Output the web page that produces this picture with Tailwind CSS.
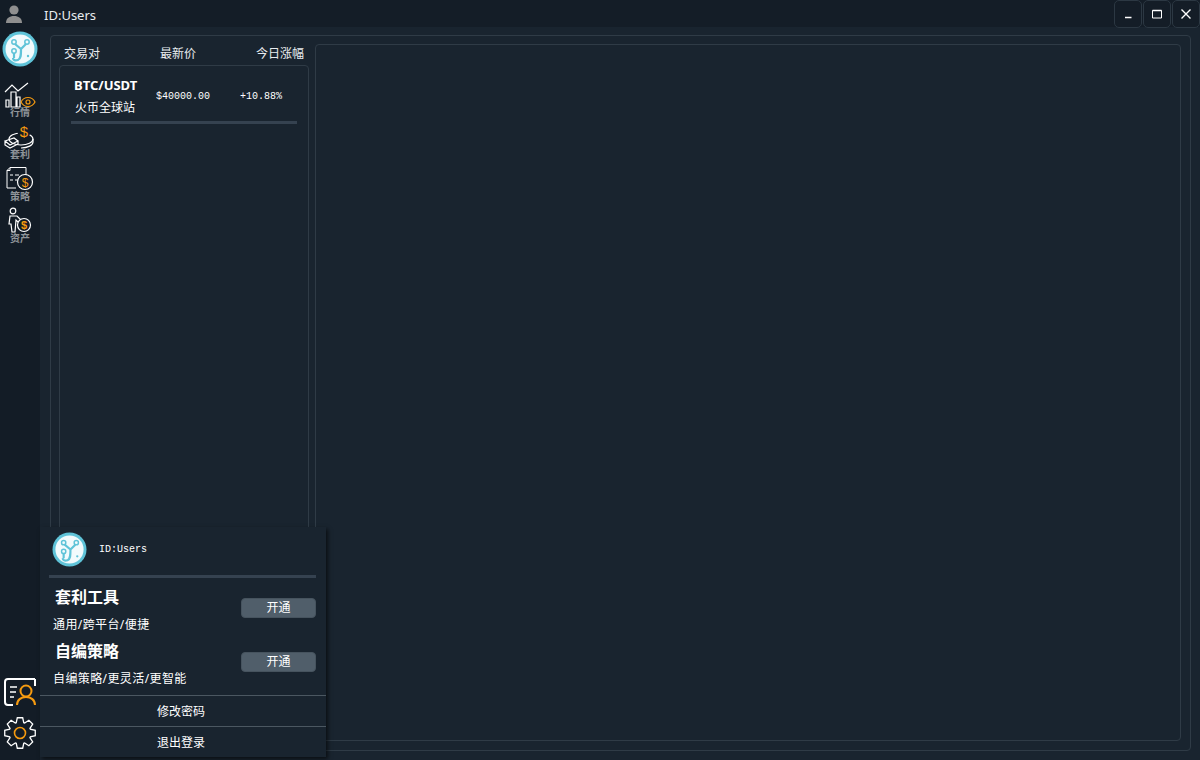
<!DOCTYPE html>
<html lang="zh">
<head>
  <meta charset="UTF-8">
  <title>ID:Users</title>
  <script src="https://cdn.jsdelivr.net/npm/@tailwindcss/browser@4"></script>
</head>
<body class="bg-[#19242f] text-white overflow-hidden font-['Noto_Sans','Noto_Sans_CJK_SC',sans-serif]">
  <div class="relative flex w-[1200px] h-[760px]">

    <!-- sidebar -->
    <aside class="w-10 h-full bg-[#131c26] flex flex-col items-center shrink-0">
      <svg class="w-5 h-5 mt-[4px] ml-[4px] self-start shrink-0" viewBox="0 0 20 20" fill="#8f8f8f"><circle cx="10" cy="6" r="4.6"/><path d="M2 19c0-5 3.500-7 8-7s8 2 8 7z"/></svg>
      <svg class="w-9 h-9 mt-[7px] shrink-0" viewBox="0 0 36 36">
        <circle cx="18" cy="18" r="17.500" fill="#5fc3d8"/><circle cx="18" cy="18" r="14.500" fill="#f2fafc"/>
        <path d="M13 13l6 5M24 13l-5 5c0 6 0 10-3 11s-5 0-5-2M12 22v5" fill="none" stroke="#5fc3d8" stroke-width="2.200"/>
        <circle cx="12" cy="11" r="2.200" fill="none" stroke="#5fc3d8" stroke-width="1.500"/><circle cx="25" cy="11" r="2.200" fill="none" stroke="#5fc3d8" stroke-width="1.500"/><circle cx="12" cy="20" r="2.200" fill="none" stroke="#5fc3d8" stroke-width="1.500"/><circle cx="26" cy="25" r="1.200" fill="#5fc3d8"/>
      </svg>

      <div class="w-10 h-[42px] mt-[15px] shrink-0 flex flex-col items-center">
        <svg class="w-10 h-[25px] shrink-0 overflow-visible" viewBox="0 0 40 25" fill="none" stroke="#fff" stroke-width="1.200">
          <path d="M5 10l7-7 6 6 10-8"/><path d="M6 25v-7h3v7zM11 25V10h5v15zM17 25V15h3v10z"/>
          <path d="M21 20c3-6 11-6 14 0-3 6-11 6-14 0z" stroke="#f59a10"/><circle cx="28" cy="20" r="2" stroke="#f59a10"/>
        </svg>
        <span class="relative text-[10px] leading-[10px] text-[#8f9499] font-bold">行情</span>
      </div>

      <div class="w-10 h-[42px] shrink-0 flex flex-col items-center">
        <svg class="w-10 h-[25px] shrink-0 overflow-visible" viewBox="0 0 40 25" fill="none" stroke="#fff" stroke-width="1.200">
          <ellipse cx="21" cy="15" rx="12" ry="6"/><path d="M33 15v3c0 3-5 6-12 6"/>
          <path d="M5 17l9-3 4 3-8 4zM5 17v4l5 3 8-4v-3"/>
          <circle cx="24" cy="8" r="6.500" fill="#131c26" stroke="none"/>
          <text x="24" y="13" font-size="15" text-anchor="middle" fill="#f59a10" stroke="none" font-family="Liberation Sans">$</text>
        </svg>
        <span class="relative text-[10px] leading-[10px] text-[#8f9499] font-bold">套利</span>
      </div>

      <div class="w-10 h-[42px] shrink-0 flex flex-col items-center">
        <svg class="w-10 h-[25px] shrink-0 overflow-visible" viewBox="0 0 40 25" fill="none" stroke="#fff" stroke-width="1">
          <path d="M26 9V1.500H10L7 4.500V22h9M10 1.500v3H7"/><path d="M10 9h3M15 9h4M10 14h3M15 14h2"/>
          <circle cx="25" cy="16" r="7.500" stroke-width="1.200"/>
          <text x="25" y="20.500" font-size="12" text-anchor="middle" fill="#f59a10" stroke="none" font-family="Liberation Sans">$</text>
        </svg>
        <span class="relative text-[10px] leading-[10px] text-[#8f9499] font-bold">策略</span>
      </div>

      <div class="w-10 h-[42px] shrink-0 flex flex-col items-center">
        <svg class="w-10 h-[25px] shrink-0 overflow-visible" viewBox="0 0 40 25" fill="none" stroke="#fff" stroke-width="1.200">
          <circle cx="13" cy="3" r="2.800"/><path d="M9 16l1-8h7l4 4-3 2-2-2-1 12h-3l-1-8z"/>
          <circle cx="24" cy="17" r="6.500" fill="#131c26"/>
          <text x="24" y="21" font-size="11" font-weight="bold" text-anchor="middle" fill="#f59a10" stroke="none" font-family="Liberation Sans">$</text>
        </svg>
        <span class="relative text-[10px] leading-[10px] text-[#8f9499] font-bold">资产</span>
      </div>

      <div class="mt-auto flex flex-col items-center gap-[11px] pb-[11px]">
        <svg class="w-8 h-7" viewBox="0 0 32 28" fill="none" stroke-width="2">
          <path d="M31 1H4a3 3 0 0 0-3 3v20a3 3 0 0 0 3 3h5" stroke="#fff"/><path d="M31 1v7" stroke="#fff"/>
          <path d="M6 9h7M6 14h6M6 19h4" stroke="#fff" stroke-width="1.600"/>
          <circle cx="22" cy="13" r="5.500" stroke="#f59a10"/><path d="M13 27c0-5 4-8 9-8s9 3 9 8" stroke="#f59a10"/>
        </svg>
        <svg class="w-8 h-8" viewBox="0 0 32 32" fill="none">
          <polygon transform="translate(16 16)" stroke="#fff" stroke-width="1.300" points="-3.760,-10.340 -2.690,-15.260 2.690,-15.260 3.760,-10.340 4.650,-9.970 8.890,-12.700 12.700,-8.890 9.970,-4.650 10.340,-3.760 15.260,-2.690 15.260,2.690 10.340,3.760 9.970,4.650 12.700,8.890 8.890,12.700 4.650,9.970 3.760,10.340 2.690,15.260 -2.690,15.260 -3.760,10.340 -4.650,9.970 -8.890,12.700 -12.700,8.890 -9.970,4.650 -10.340,3.760 -15.260,2.690 -15.260,-2.690 -10.340,-3.760 -9.970,-4.650 -12.700,-8.890 -8.890,-12.700 -4.650,-9.970"/>
          <circle cx="16" cy="16" r="5.500" stroke="#f59a10" stroke-width="1.600"/>
        </svg>
      </div>
    </aside>

    <!-- main -->
    <div class="flex-1 min-w-0 flex flex-col">
      <header class="h-[27px] bg-[#141d27] flex items-start shrink-0">
        <span class="text-[13px] leading-[18px] mt-[6px] ml-[4px] text-[#e8ecef]">ID:Users</span>
        <div class="ml-auto flex gap-[1px]">
          <button class="w-[28px] h-[28px] rounded-[5px] border border-[#2c3843] bg-[#141d27] flex items-center justify-center">
            <svg class="w-3 h-3" viewBox="0 0 12 12"><path d="M3 9.500h6.500" stroke="#fff" stroke-width="1.500"/></svg>
          </button>
          <button class="w-[28px] h-[28px] rounded-[5px] border border-[#2c3843] bg-[#141d27] flex items-center justify-center">
            <svg class="w-3 h-3" viewBox="0 0 12 12" fill="none"><path d="M1.500 2.500h9v7.500h-9z" stroke="#fff"/><path d="M1.500 2.500h9" stroke="#fff" stroke-width="1.500"/></svg>
          </button>
          <button class="w-[28px] h-[28px] rounded-[5px] border border-[#2c3843] bg-[#141d27] flex items-center justify-center">
            <svg class="w-3 h-3" viewBox="0 0 12 12"><path d="M1.500 1.500l9 9M10.500 1.500l-9 9" stroke="#fff" stroke-width="1.400"/></svg>
          </button>
        </div>
      </header>

      <div class="flex-1 min-h-0 pt-[8px] pl-[10px] pr-[9px] pb-[9px]">
        <div class="h-full border border-[#2f3b46] rounded-[4px] flex gap-[6px] pt-[8px] pl-[8px] pr-[9px] pb-[9px]">
          <!-- pair list -->
          <section class="w-[250px] shrink-0 flex flex-col">
            <div class="flex justify-between h-[21px] text-[12px] leading-[20px] text-[#e8ecef] pl-[5px] pr-[5px] shrink-0">
              <span>交易对</span><span>最新价</span><span>今日涨幅</span>
            </div>
            <div class="flex-1 border border-[#2f3b46] rounded-[4px] px-[11px]">
              <div class="flex h-[58px] border-b-[3px] border-[#354250]">
                <div class="w-[85px] shrink-0 pl-[3px]">
                  <div class="text-[13px] leading-[16px] font-bold mt-[11px]">BTC/USDT</div>
                  <div class="text-[12px] leading-[16px] mt-[7px] ml-[1px]">火币全球站</div>
                </div>
                <span class="w-[84px] shrink-0 font-['Liberation_Mono',monospace] text-[10px] leading-[14px] mt-[23px] pt-[1px]">$40000.00</span>
                <span class="font-['Liberation_Mono',monospace] text-[10px] leading-[14px] mt-[23px] pt-[1px]">+10.88%</span>
              </div>
            </div>
          </section>
          <!-- chart area -->
          <section class="flex-1 border border-[#2f3b46] rounded-[4px]"></section>
        </div>
      </div>
    </div>

    <!-- user menu -->
    <div class="absolute left-[40px] top-[527px] w-[286px] h-[230px] bg-[#19242f] shadow-[2px_2px_4px_rgba(0,0,0,0.6)] flex flex-col">
      <div class="h-[46px] flex items-center pl-[12px] pb-[2px] shrink-0">
        <svg class="w-[35px] h-[35px] shrink-0" viewBox="0 0 36 36">
          <circle cx="18" cy="18" r="17.500" fill="#5fc3d8"/><circle cx="18" cy="18" r="14.500" fill="#f2fafc"/>
          <path d="M13 13l6 5M24 13l-5 5c0 6 0 10-3 11s-5 0-5-2M12 22v5" fill="none" stroke="#5fc3d8" stroke-width="2.200"/>
          <circle cx="12" cy="11" r="2.200" fill="none" stroke="#5fc3d8" stroke-width="1.500"/><circle cx="25" cy="11" r="2.200" fill="none" stroke="#5fc3d8" stroke-width="1.500"/><circle cx="12" cy="20" r="2.200" fill="none" stroke="#5fc3d8" stroke-width="1.500"/><circle cx="26" cy="25" r="1.200" fill="#5fc3d8"/>
        </svg>
        <span class="ml-[12px] font-['Liberation_Mono',monospace] text-[10px]">ID:Users</span>
      </div>
      <div class="mt-[2px] ml-[9px] mr-[10px] h-[3px] bg-[#354250] shrink-0"></div>
      <div class="flex-1 min-h-0 pl-[14px] pr-[10px] pt-[4px]">
        <div class="flex items-center h-[54px]">
          <div class="flex-1">
            <div class="text-[16px] leading-[22px] font-bold ml-[1px]">套利工具</div>
            <div class="text-[12px] leading-[16px] tracking-[0.4px] mt-[9px] mb-[-1px] ml-[-1px]">通用/跨平台/便捷</div>
          </div>
          <button class="w-[75px] h-[20px] mb-[2px] bg-[#505e6a] rounded-[4px] border border-[#46535e] text-[12px] leading-[16px]">开通</button>
        </div>
        <div class="flex items-center h-[54px]">
          <div class="flex-1">
            <div class="text-[16px] leading-[22px] font-bold ml-[1px]">自编策略</div>
            <div class="text-[12px] leading-[16px] tracking-[0.4px] mt-[9px] mb-[-1px] ml-[-1px]">自编策略/更灵活/更智能</div>
          </div>
          <button class="w-[75px] h-[20px] mb-[2px] bg-[#505e6a] rounded-[4px] border border-[#46535e] text-[12px] leading-[16px]">开通</button>
        </div>
      </div>
      <div class="h-[31px] border-t border-[#4b5761] flex items-center justify-center pr-[4px] pt-[1px] text-[12px] shrink-0">修改密码</div>
      <div class="h-[31px] border-t border-[#4b5761] flex items-center justify-center pr-[4px] pt-[1px] text-[12px] shrink-0">退出登录</div>
    </div>
  </div>
</body>
</html>
